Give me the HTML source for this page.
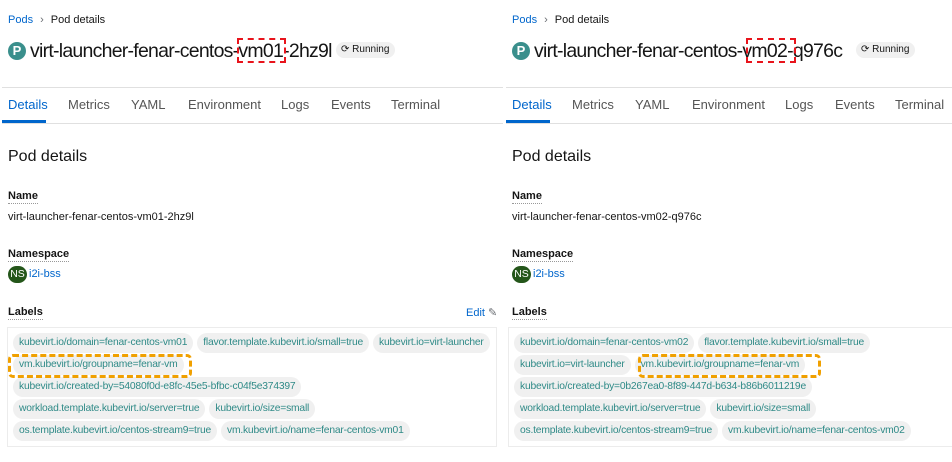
<!DOCTYPE html>
<html><head><meta charset="utf-8"><style>
*{margin:0;padding:0;box-sizing:border-box}
body{width:952px;height:462px;overflow:hidden;background:#fff;font-family:"Liberation Sans",sans-serif;color:#151515;position:relative}
.p{position:absolute;top:0;height:462px;overflow:hidden}
.a{position:absolute;white-space:nowrap}
.bc{top:14px;font-size:11px}
.bc .l{color:#0066cc}
.bc .s{color:#6a6e73;margin:0 7px}
.ic{top:42px;left:8px;width:18px;height:18px;border-radius:50%;background:#3a8f8c;color:#fff;font-size:13px;font-weight:bold;text-align:center;line-height:18px}
.tt{top:38px;left:30px;font-size:19.5px;letter-spacing:-0.75px;line-height:26px}
.run{top:42px;height:16px;border-radius:8px;background:#f0f0f0;font-size:10px;line-height:16px;padding:0 6px 0 5px}
.hl{top:87px;left:2px;height:1px;background:#e0e0e0}
.hl2{top:123px;left:2px;height:1px;background:#e0e0e0}
.tab{top:97px;font-size:13px;color:#555}
.tab.on{color:#0066cc}
.ul{top:120px;left:2px;width:44px;height:3px;background:#0066cc}
.h2{top:148px;left:8px;font-size:16px}
.lb{left:8px;font-size:11px;font-weight:bold;border-bottom:1px dotted #999;padding-bottom:1px}
.v{left:8px;font-size:11px}
.ns{left:8px;top:266px;width:19px;height:17px;border-radius:9px;background:#24561a;color:#fff;font-size:10.5px;line-height:17px;text-align:center}
.nsl{left:29px;top:268px;font-size:11px;color:#0066cc}
.box{top:327px;left:7px;height:120px;border:1px solid #ececec}
.row{position:absolute;left:5px;display:flex;gap:4px}
.c{height:20px;border-radius:10px;background:#f0f0f0;color:#2f8a87;font-size:10.3px;line-height:20px;padding:0 6px;white-space:nowrap;letter-spacing:-0.2px}
.od{position:absolute;border:3px dashed #f0a000;border-radius:5px}
.rd{position:absolute;border:2.5px dashed #e8141c}
</style></head><body>

<div class="p" style="left:0;width:504px">
<div class="a bc" style="left:8px"><span class="l">Pods</span><span class="s">›</span>Pod details</div>
<div class="a ic">P</div>
<div class="a tt">virt-launcher-fenar-centos-vm01-2hz9l</div>
<div class="a run" style="left:336px">⟳ Running</div>
<div class="rd" style="left:237px;top:38px;width:49px;height:25px;border-top:none;border-bottom:none"></div>
<div class="rd" style="left:237px;top:38px;width:49px;height:25px;border-left:none;border-right:none"></div>
<div class="a hl" style="width:501px"></div>
<div class="a tab on" style="left:8px">Details</div>
<div class="a tab" style="left:68px">Metrics</div>
<div class="a tab" style="left:131px">YAML</div>
<div class="a tab" style="left:188px">Environment</div>
<div class="a tab" style="left:281px">Logs</div>
<div class="a tab" style="left:331px">Events</div>
<div class="a tab" style="left:391px">Terminal</div>
<div class="a ul"></div>
<div class="a hl2" style="width:501px"></div>
<div class="a h2">Pod details</div>
<div class="a lb" style="top:190px">Name</div>
<div class="a v" style="top:211px">virt-launcher-fenar-centos-vm01-2hz9l</div>
<div class="a lb" style="top:248px">Namespace</div>
<div class="a ns">NS</div><div class="a nsl">i2i-bss</div>
<div class="a lb" style="top:306px">Labels</div>
<div class="a" style="top:306px;left:466px;font-size:11px;color:#0066cc">Edit <span style="color:#6a6e73">✎</span></div>
<div class="a box" style="width:490px">
<div class="row" style="top:5px"><span class="c">kubevirt.io/domain=fenar-centos-vm01</span><span class="c">flavor.template.kubevirt.io/small=true</span><span class="c">kubevirt.io=virt-launcher</span></div>
<div class="row" style="top:27px"><span class="c">vm.kubevirt.io/groupname=fenar-vm</span></div>
<div class="row" style="top:49px"><span class="c">kubevirt.io/created-by=54080f0d-e8fc-45e5-bfbc-c04f5e374397</span></div>
<div class="row" style="top:71px"><span class="c">workload.template.kubevirt.io/server=true</span><span class="c">kubevirt.io/size=small</span></div>
<div class="row" style="top:93px"><span class="c">os.template.kubevirt.io/centos-stream9=true</span><span class="c">vm.kubevirt.io/name=fenar-centos-vm01</span></div>
</div>
<div class="od" style="left:8px;top:354px;width:184px;height:24px"></div>
</div>

<div class="p" style="left:504px;width:448px">
<div class="a bc" style="left:8px"><span class="l">Pods</span><span class="s">›</span>Pod details</div>
<div class="a ic">P</div>
<div class="a tt">virt-launcher-fenar-centos-vm02-q976c</div>
<div class="a run" style="left:352px">⟳ Running</div>
<div class="rd" style="left:242px;top:38px;width:50px;height:25px;border-top:none;border-bottom:none"></div>
<div class="rd" style="left:242px;top:38px;width:50px;height:25px;border-left:none;border-right:none"></div>
<div class="a hl" style="width:460px"></div>
<div class="a tab on" style="left:8px">Details</div>
<div class="a tab" style="left:68px">Metrics</div>
<div class="a tab" style="left:131px">YAML</div>
<div class="a tab" style="left:188px">Environment</div>
<div class="a tab" style="left:281px">Logs</div>
<div class="a tab" style="left:331px">Events</div>
<div class="a tab" style="left:391px">Terminal</div>
<div class="a ul"></div>
<div class="a hl2" style="width:460px"></div>
<div class="a h2">Pod details</div>
<div class="a lb" style="top:190px">Name</div>
<div class="a v" style="top:211px">virt-launcher-fenar-centos-vm02-q976c</div>
<div class="a lb" style="top:248px">Namespace</div>
<div class="a ns">NS</div><div class="a nsl">i2i-bss</div>
<div class="a lb" style="top:306px">Labels</div>
<div class="a box" style="width:470px;left:4px">
<div class="row" style="top:5px"><span class="c">kubevirt.io/domain=fenar-centos-vm02</span><span class="c">flavor.template.kubevirt.io/small=true</span></div>
<div class="row" style="top:27px"><span class="c">kubevirt.io=virt-launcher</span><span class="c">vm.kubevirt.io/groupname=fenar-vm</span></div>
<div class="row" style="top:49px"><span class="c">kubevirt.io/created-by=0b267ea0-8f89-447d-b634-b86b6011219e</span></div>
<div class="row" style="top:71px"><span class="c">workload.template.kubevirt.io/server=true</span><span class="c">kubevirt.io/size=small</span></div>
<div class="row" style="top:93px"><span class="c">os.template.kubevirt.io/centos-stream9=true</span><span class="c">vm.kubevirt.io/name=fenar-centos-vm02</span></div>
</div>
<div class="od" style="left:134px;top:354px;width:183px;height:24px"></div>
</div>

</body></html>
